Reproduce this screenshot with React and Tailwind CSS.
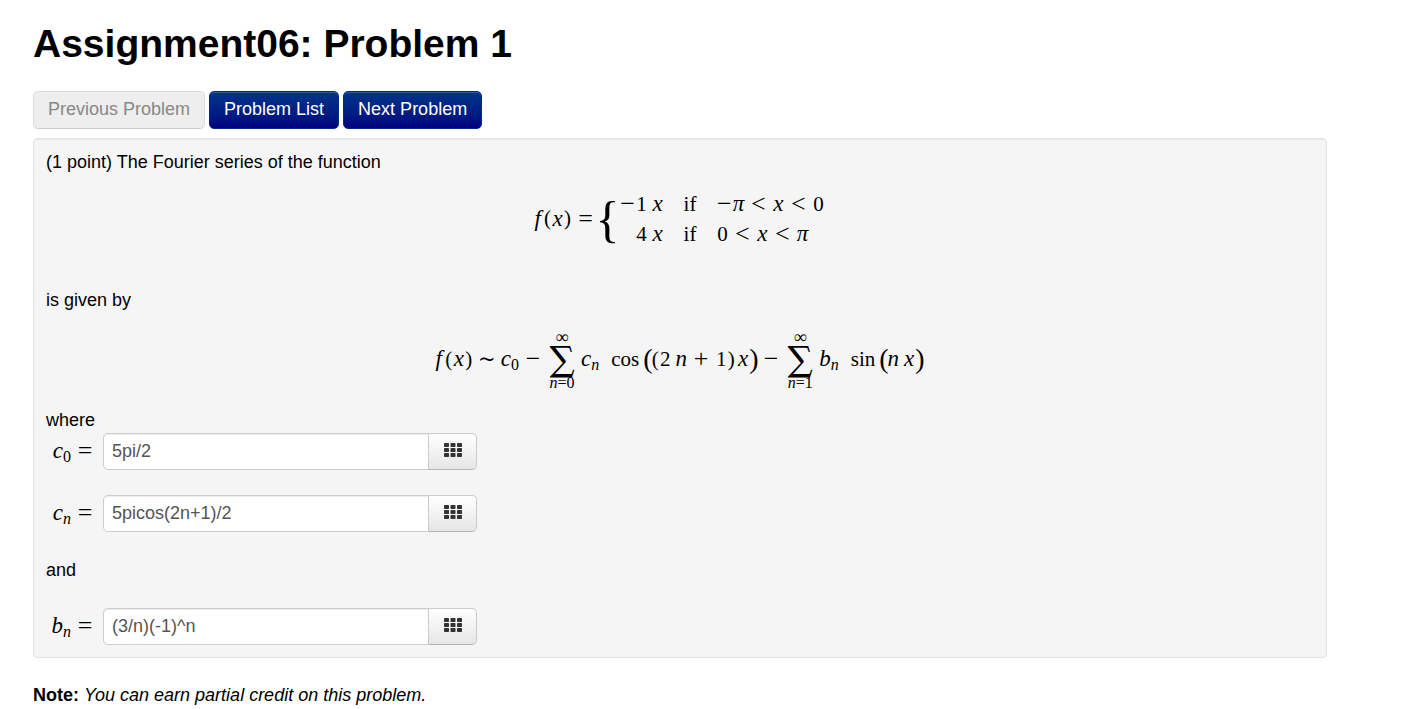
import React from 'react';

const sizes = {
  sm: 'w-2',
  md: 'w-3',
};

// One math atom, centred in its slot
const Sym = ({ children, size = 'md' }) => (
  <span className={`inline-flex justify-center ${sizes[size]}`}>{children}</span>
);

const Var = ({ children }) => (
  <span className="inline-flex justify-center w-3 italic text-[23px] leading-6">{children}</span>
);

const operator = 'inline-flex justify-center w-4 text-[26px] leading-6';

const Op = ({ children }) => <span className={`${operator} mx-[6px]`}>{children}</span>;

const Minus = () => <span className={operator}>−</span>;

const Sub = ({ base, sub, italic = false }) => (
  <span className="inline-flex items-baseline">
    <i className="text-[23px] leading-6">{base}</i>
    <sub className={`bottom-0 top-1 text-[16px] leading-4 ${italic ? 'italic' : ''}`}>{sub}</sub>
  </span>
);

const Sum = ({ from }) => (
  <span className="inline-flex flex-col items-center w-[30px] pt-[3px] mr-1 leading-none">
    <span className="text-[18px] h-3 leading-3">∞</span>
    <span className="font-['DejaVu_Math_TeX_Gyre','Liberation_Serif',serif] text-[30px] h-8 leading-9">∑</span>
    <span className="text-[16px] h-4 leading-4">
      <i>n</i>={from}
    </span>
  </span>
);

const Fx = () => (
  <span className="inline-flex items-center">
    <Var>f</Var>
    <Sym size="sm">(</Sym>
    <Var>x</Var>
    <Sym size="sm">)</Sym>
  </span>
);

const Big = ({ children }) => <span className="w-2 text-[28px] leading-6">{children}</span>;

const PiecewiseFormula = () => (
  <div className="flex items-center justify-center h-[88px] pb-px pr-1 font-['Liberation_Serif',serif] text-[21px]">
    <Fx />
    <Op>=</Op>
    <span className="w-6 -ml-1 text-[50px] leading-[52px]">{'{'}</span>
    <div className="grid grid-cols-[auto_auto_auto] gap-x-5 pt-px leading-[30px]">
      <span className="flex items-center justify-end">
        <Minus />
        <Sym>1</Sym>
        <span className="ml-1"><Var>x</Var></span>
      </span>
      <span>if</span>
      <span className="flex items-center">
        <Minus />
        <Var>π</Var>
        <Op>&lt;</Op>
        <Var>x</Var>
        <Op>&lt;</Op>
        <Sym>0</Sym>
      </span>
      <span className="flex items-center justify-end">
        <Sym>4</Sym>
        <span className="ml-1"><Var>x</Var></span>
      </span>
      <span>if</span>
      <span className="flex items-center">
        <Sym>0</Sym>
        <Op>&lt;</Op>
        <Var>x</Var>
        <Op>&lt;</Op>
        <Var>π</Var>
      </span>
    </div>
  </div>
);

const SeriesFormula = () => (
  <div className="flex items-center justify-center h-[95px] pb-[3px] pr-1 font-['Liberation_Serif',serif] text-[21px]">
    <Fx />
    <span className="inline-flex justify-center w-4 mx-[6px] font-['DejaVu_Math_TeX_Gyre','Liberation_Serif',serif] leading-6">∼</span>
    <Sub base="c" sub="0" />
    <Op>−</Op>
    <Sum from="0" />
    <Sub base="c" sub="n" italic />
    <span className="ml-3 mr-1">cos</span>
    <Big>(</Big>
    <Sym size="sm">(</Sym>
    <Sym>2</Sym>
    <span className="ml-1"><Var>n</Var></span>
    <Op>+</Op>
    <Sym>1</Sym>
    <Sym size="sm">)</Sym>
    <span className="ml-0.5"><Var>x</Var></span>
    <Big>)</Big>
    <Op>−</Op>
    <Sum from="1" />
    <Sub base="b" sub="n" italic />
    <span className="ml-3 mr-1">sin</span>
    <Big>(</Big>
    <Var>n</Var>
    <span className="ml-1"><Var>x</Var></span>
    <Big>)</Big>
  </div>
);

const GridIcon = () => (
  <svg className="mb-[3px]" width="18" height="14" viewBox="0 0 18 14" fill="#333" aria-hidden="true">
    {[0, 5, 10].map((y) =>
      [0, 6.5, 13].map((x) => <rect key={`${x}-${y}`} x={x} y={y} width="5" height="4" rx="0.8" />)
    )}
  </svg>
);

const AnswerRow = ({ id, base, sub, italic, value }) => (
  <div className="flex items-center">
    <label
      htmlFor={id}
      className="flex items-center justify-end w-[57px] pr-1 pb-px font-['Liberation_Serif',serif] text-[21px]"
    >
      <Sub base={base} sub={sub} italic={italic} />
      <Op>=</Op>
    </label>
    <input
      id={id}
      type="text"
      defaultValue={value}
      className="w-[326px] h-[37px] px-2 text-[#555] bg-white border border-[#ccc] rounded-l-[5px] shadow-[inset_0_1px_1px_rgba(0,0,0,0.075)]"
    />
    <button
      type="button"
      aria-label="Open equation editor"
      className="flex items-center justify-center -ml-px w-[49px] h-[37px] border border-[#ccc] border-b-[#b3b3b3] rounded-r-[5px] bg-linear-to-b from-white to-[#e6e6e6]"
    >
      <GridIcon />
    </button>
  </div>
);

const navButton =
  'h-[38px] px-[14px] border rounded-[5px] leading-6 pb-[3px] whitespace-nowrap';
const primary =
  'text-white border-[#002a80] bg-linear-to-b from-[#003388] to-[#000080] shadow-[inset_0_1px_0_rgba(255,255,255,0.2)]';

export default function App() {
  return (
    <main className="pt-5 pl-[33px] pr-[87px] font-['Liberation_Sans',Arial,sans-serif] text-[18px] leading-[25px] text-black">
      <h1 className="text-[39px] leading-[48px] font-bold">Assignment06: Problem 1</h1>

      {/* Problem navigation */}
      <nav className="flex gap-1 mt-[23px]">
        <button type="button" disabled className={`${navButton} text-[#888] bg-[#eee] border-[#ddd] border-b-[#ccc]`}>
          Previous Problem
        </button>
        <button type="button" className={`${navButton} ${primary}`}>Problem List</button>
        <button type="button" className={`${navButton} ${primary}`}>Next Problem</button>
      </nav>

      {/* Problem body */}
      <section className="mt-[9px] p-3 pt-[11px] bg-[#f5f5f5] border border-[#e3e3e3] rounded-[4px] shadow-[inset_0_1px_1px_rgba(0,0,0,0.05)]">
        <p>(1 point) The Fourier series of the function</p>
        <PiecewiseFormula />
        <p className="mt-[25px]">is given by</p>
        <SeriesFormula />
        <p>where</p>
        <AnswerRow id="c0" base="c" sub="0" value="5pi/2" />
        <div className="mt-[25px]">
          <AnswerRow id="cn" base="c" sub="n" italic value="5picos(2n+1)/2" />
        </div>
        <p className="mt-[26px] mb-[25px]">and</p>
        <AnswerRow id="bn" base="b" sub="n" italic value="(3/n)(-1)^n" />
      </section>

      <p className="mt-[25px]">
        <b>Note:</b> <i>You can earn partial credit on this problem.</i>
      </p>
    </main>
  );
}
